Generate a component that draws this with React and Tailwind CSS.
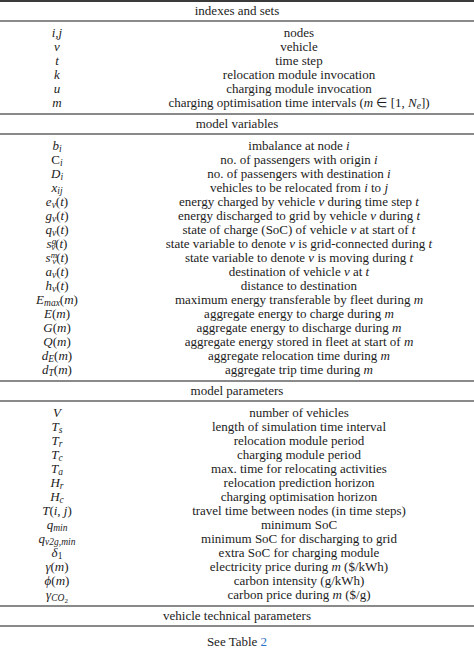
import React from 'react';

// petits helpers pour la notation mathématique
const I = ({ children }) => <i>{children}</i>;
const Sub = ({ children }) => <sub className="text-[9.5px] italic">{children}</sub>;
const SubSup = ({ sub, sup }) => (
  <>
    <sup className="text-[9px] italic">{sup}</sup>
    <sub className="text-[9px] italic -ml-[5px]">{sub}</sub>
  </>
);

const indexes = [
  [<I>i,j</I>, 'nodes'],
  [<I>v</I>, 'vehicle'],
  [<I>t</I>, 'time step'],
  [<I>k</I>, 'relocation module invocation'],
  [<I>u</I>, 'charging module invocation'],
  [<I>m</I>, <>charging optimisation time intervals (<I>m</I> ∈ [1, <I>N</I><Sub>e</Sub>])</>],
];

const variables = [
  [<><I>b</I><Sub>i</Sub></>, <>imbalance at node <I>i</I></>],
  [<>C<Sub>i</Sub></>, <>no. of passengers with origin <I>i</I></>],
  [<><I>D</I><Sub>i</Sub></>, <>no. of passengers with destination <I>i</I></>],
  [<><I>x</I><Sub>ij</Sub></>, <>vehicles to be relocated from <I>i</I> to <I>j</I></>],
  [<><I>e</I><Sub>v</Sub>(<I>t</I>)</>, <>energy charged by vehicle <I>v</I> during time step <I>t</I></>],
  [<><I>g</I><Sub>v</Sub>(<I>t</I>)</>, <>energy discharged to grid by vehicle <I>v</I> during <I>t</I></>],
  [<><I>q</I><Sub>v</Sub>(<I>t</I>)</>, <>state of charge (SoC) of vehicle <I>v</I> at start of <I>t</I></>],
  [<><I>s</I><SubSup sub="v" sup="g" />(<I>t</I>)</>, <>state variable to denote <I>v</I> is grid-connected during <I>t</I></>],
  [<><I>s</I><SubSup sub="v" sup="m" />(<I>t</I>)</>, <>state variable to denote <I>v</I> is moving during <I>t</I></>],
  [<><I>a</I><Sub>v</Sub>(<I>t</I>)</>, <>destination of vehicle <I>v</I> at <I>t</I></>],
  [<><I>h</I><Sub>v</Sub>(<I>t</I>)</>, 'distance to destination'],
  [<><I>E</I><Sub>max</Sub>(<I>m</I>)</>, <>maximum energy transferable by fleet during <I>m</I></>],
  [<><I>E</I>(<I>m</I>)</>, <>aggregate energy to charge during <I>m</I></>],
  [<><I>G</I>(<I>m</I>)</>, <>aggregate energy to discharge during <I>m</I></>],
  [<><I>Q</I>(<I>m</I>)</>, <>aggregate energy stored in fleet at start of <I>m</I></>],
  [<><I>d</I><Sub>E</Sub>(<I>m</I>)</>, <>aggregate relocation time during <I>m</I></>],
  [<><I>d</I><Sub>T</Sub>(<I>m</I>)</>, <>aggregate trip time during <I>m</I></>],
];

const parameters = [
  [<I>V</I>, 'number of vehicles'],
  [<><I>T</I><Sub>s</Sub></>, 'length of simulation time interval'],
  [<><I>T</I><Sub>r</Sub></>, 'relocation module period'],
  [<><I>T</I><Sub>c</Sub></>, 'charging module period'],
  [<><I>T</I><Sub>a</Sub></>, 'max. time for relocating activities'],
  [<><I>H</I><Sub>r</Sub></>, 'relocation prediction horizon'],
  [<><I>H</I><Sub>c</Sub></>, 'charging optimisation horizon'],
  [<><I>T</I>(<I>i</I>, <I>j</I>)</>, 'travel time between nodes (in time steps)'],
  [<><I>q</I><Sub>min</Sub></>, 'minimum SoC'],
  [<><I>q</I><Sub>v2g,min</Sub></>, 'minimum SoC for discharging to grid'],
  [<><I>δ</I><sub className="text-[9.5px]">1</sub></>, 'extra SoC for charging module'],
  [<><I>γ</I>(<I>m</I>)</>, <>electricity price during <I>m</I> ($/kWh)</>],
  [<><I>ϕ</I>(<I>m</I>)</>, 'carbon intensity (g/kWh)'],
  [<><I>γ</I><Sub>CO<sub className="text-[7px] not-italic">2</sub></Sub></>, <>carbon price during <I>m</I> ($/g)</>],
];

function Heading({ children }) {
  return <div className="h-[18px] flex items-center justify-center">{children}</div>;
}

function Rows({ rows }) {
  return (
    <div className="pt-[4px] pb-[3px] border-y-2 border-[#8a8a8a]">
      {rows.map(([sym, desc], idx) => (
        <div key={idx} className="grid grid-cols-[114px_1fr] h-[14px] items-center">
          <div className="text-center whitespace-nowrap">{sym}</div>
          <div className="text-center whitespace-nowrap pl-[10px]">{desc}</div>
        </div>
      ))}
    </div>
  );
}

export default function App() {
  return (
    <div
      className="w-[474px] h-[658px] bg-white text-[#1c1c1c] text-[13px] leading-[14px] overflow-hidden"
      style={{ fontFamily: '"Liberation Serif", serif' }}
    >
      <div className="border-t-2 border-[#3a3a3a]">
        <Heading>indexes and sets</Heading>
        <Rows rows={indexes} />
        <Heading>model variables</Heading>
        <Rows rows={variables} />
        <Heading>model parameters</Heading>
        <Rows rows={parameters} />
        <Heading>vehicle technical parameters</Heading>
        <div className="border-t-2 border-[#8a8a8a] h-[32px] flex items-center justify-center">
          <span>
            See Table <span className="text-[#2a72c8]">2</span>
          </span>
        </div>
      </div>
    </div>
  );
}
